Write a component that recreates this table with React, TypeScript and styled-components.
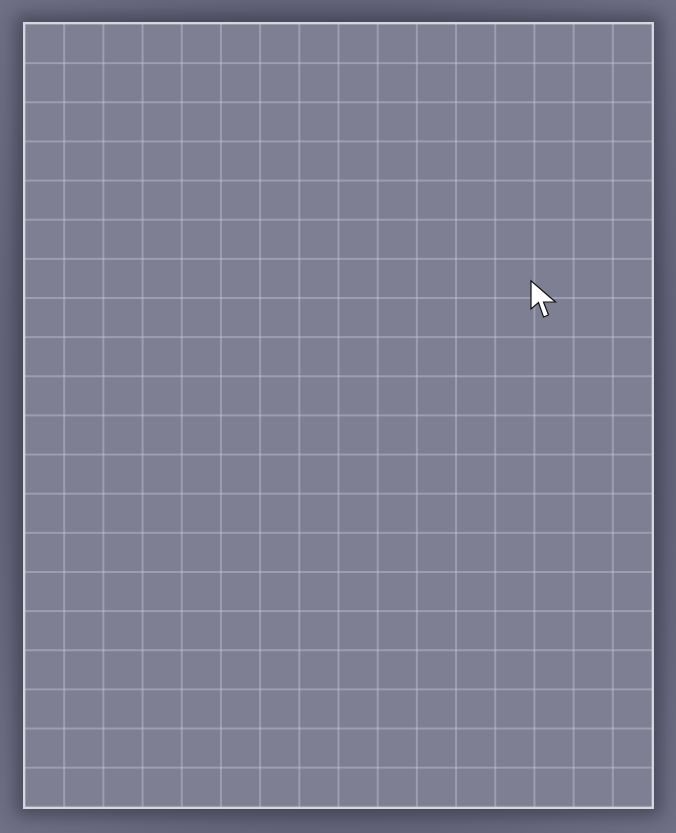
import React from "react";
import styled, { createGlobalStyle } from "styled-components";

const Global = createGlobalStyle`
  html, body {
    margin: 0;
    padding: 0;
    width: 676px;
    height: 833px;
    overflow: hidden;
    font-family: "Liberation Sans", Arial, sans-serif;
  }
  body {
    background: radial-gradient(ellipse at center, #5a5a6b 0%, #606076 62%, #707086 100%);
  }
`;

const Stage = styled.div`
  position: relative;
  width: 676px;
  height: 833px;
  box-sizing: border-box;
  padding: 22px 22px 24px 23px;
  display: flex;
`;

const Board = styled.div<{ $cols: number; $rows: number }>`
  position: relative;
  flex: 1;
  box-sizing: border-box;
  border: 2px solid #d6d6de;
  background-color: #7f7f94;
  box-shadow: 0 0 16px 7px rgba(40, 40, 55, 0.5);
  background-image:
    linear-gradient(
      to right,
      rgba(200, 200, 218, 0.42) 0 1px,
      transparent 1px calc(100% - 1px),
      rgba(200, 200, 218, 0.42) calc(100% - 1px)
    ),
    linear-gradient(
      to bottom,
      rgba(200, 200, 218, 0.42) 0 1px,
      transparent 1px calc(100% - 1px),
      rgba(200, 200, 218, 0.42) calc(100% - 1px)
    );
  background-size: calc(100% / ${(p) => p.$cols}) 100%, 100% calc(100% / ${(p) => p.$rows});
`;

const Pointer = styled.svg`
  position: absolute;
  left: 530px;
  top: 280px;
  width: 28px;
  height: 40px;
  overflow: visible;
`;

export default function App() {
  return (
    <>
      <Global />
      <Stage>
        <Board $cols={16} $rows={20} />
        <Pointer viewBox="0 0 28 40">
          <path
            d="M1 0.8 L1 29 L8.5 22.5 L13.5 37 L18.5 35 L13.5 22 L25.5 22 Z"
            fill="#ffffff"
            stroke="#111"
            strokeWidth="1.2"
            strokeLinejoin="miter"
          />
        </Pointer>
      </Stage>
    </>
  );
}
